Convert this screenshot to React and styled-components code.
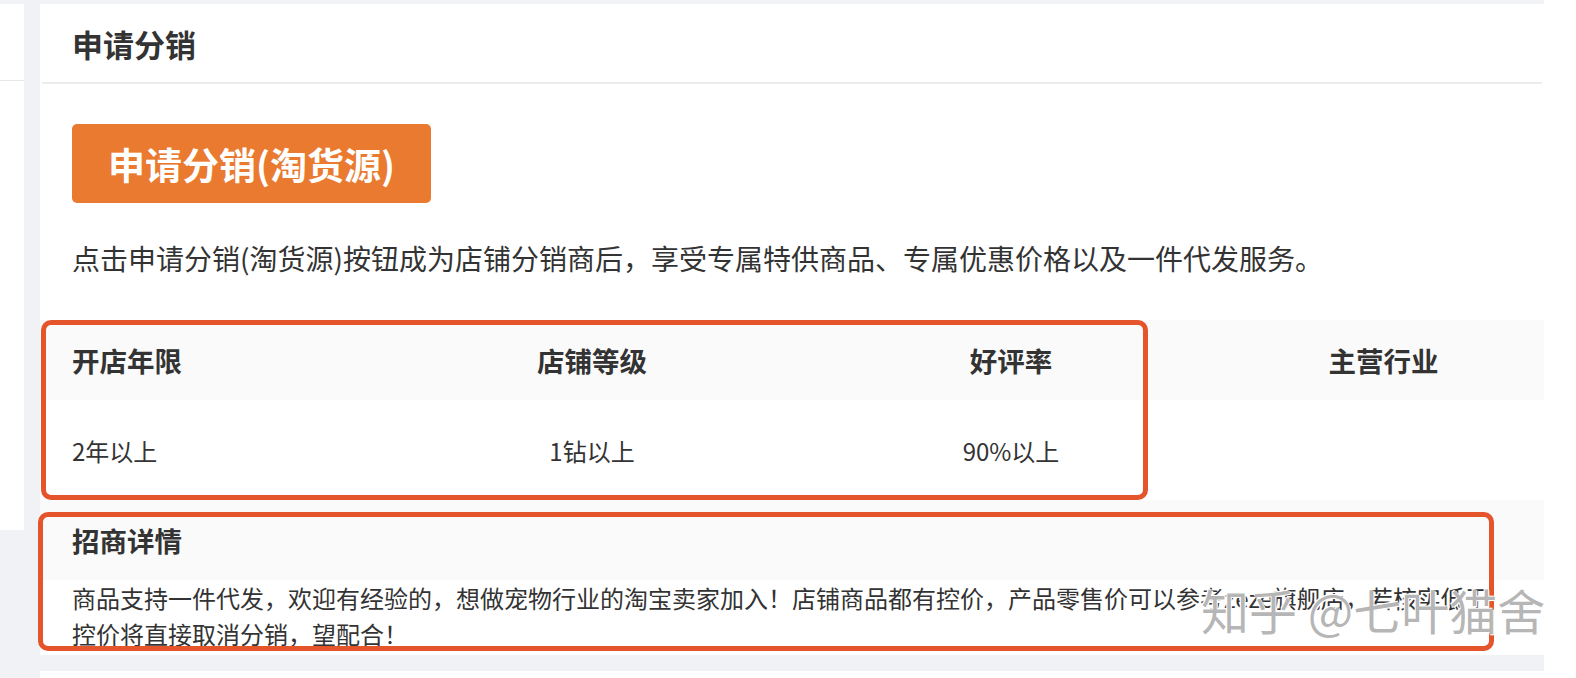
import React from "react";
import styled, { createGlobalStyle } from "styled-components";

const Global = createGlobalStyle`
  html, body { margin: 0; padding: 0; background: #ffffff; }
  body { font-family: "Noto Sans CJK SC", "Noto Sans", sans-serif; color: #333; overflow: hidden; }
`;

const Page = styled.div`
  width: 1544px;
  height: 678px;
  background: #f1f2f6;
  padding-top: 4px;
  box-sizing: border-box;
  display: flex;
  gap: 16px;
  align-items: flex-start;
  overflow: hidden;
`;

const SideCard = styled.div`
  width: 24px;
  height: 526px;
  background: #fff;
  display: flex;
  flex-direction: column;
`;

const SideTop = styled.div`
  height: 76px;
  border-bottom: 1px solid #e6e6e6;
`;

const MainCol = styled.div`
  flex: 1;
  display: flex;
  flex-direction: column;
  gap: 16px;
  position: relative;
`;

const Card = styled.div`
  background: #fff;
  display: flex;
  flex-direction: column;
`;

const CardHeader = styled.div`
  height: 78px;
  display: flex;
  align-items: center;
  margin: 0 2px;
  padding-left: 30px;
  font-size: 31px;
  font-weight: 700;
  color: #333;
  border-bottom: 2px solid #ececec;
`;

const Body = styled.div`
  padding-top: 40px;
  display: flex;
  flex-direction: column;
`;

const ApplyButton = styled.button`
  margin-left: 32px;
  width: 359px;
  height: 79px;
  border: none;
  border-radius: 5px;
  background: #e97a30;
  color: #fff;
  font-family: inherit;
  font-size: 37px;
  font-weight: 700;
  display: flex;
  align-items: center;
  justify-content: center;
  padding: 0;
  cursor: pointer;
`;

const Desc = styled.p`
  margin: 35px 0 42px 32px;
  font-size: 28px;
  line-height: 40px;
  color: #333;
`;

const Row = styled.div`
  display: grid;
  grid-template-columns: 345px 414px 424px 1fr;
  align-items: center;
  height: ${(p) => p.$h}px;
  background: ${(p) => (p.$head ? "#fafafa" : "#fff")};
`;

const Cell = styled.div`
  text-align: ${(p) => (p.$left ? "left" : "center")};
  padding-left: ${(p) => (p.$left ? "32px" : "0")};
  font-size: ${(p) => (p.$head ? "27.5px" : "24px")};
  font-weight: ${(p) => (p.$head ? 700 : 400)};
  color: #333;
`;

const DetailHead = styled.div`
  height: 80px;
  background: #fafafa;
  display: flex;
  align-items: center;
  padding-left: 32px;
  font-size: 27.5px;
  font-weight: 700;
  color: #333;
`;

const DetailText = styled.p`
  margin: 0;
  padding: 0 32px 3px 32px;
  font-size: 24px;
  line-height: 36px;
  color: #333;
`;

const NextCard = styled.div`
  background: #fff;
  height: 40px;
`;

const Mark = styled.div`
  position: absolute;
  left: ${(p) => p.$x}px;
  top: ${(p) => p.$y}px;
  width: ${(p) => p.$w}px;
  height: ${(p) => p.$h}px;
  border: 5px solid #e4552c;
  border-radius: 10px;
  box-sizing: border-box;
  pointer-events: none;
`;

const Watermark = styled.div`
  position: absolute;
  left: 1161px;
  top: 574px;
  font-size: 48px;
  line-height: 62px;
  color: rgba(150, 150, 150, 0.7);
  white-space: nowrap;
  text-shadow: 0 0 2px #fff, 1px 1px 0 #fff, -1px -1px 0 #fff;
  pointer-events: none;
`;

const cols = [
  { head: "开店年限", val: "2年以上", left: true },
  { head: "店铺等级", val: "1钻以上" },
  { head: "好评率", val: "90%以上" },
  { head: "主营行业", val: "" },
];

export default function App() {
  return (
    <>
      <Global />
      <Page>
        <SideCard>
          <SideTop />
        </SideCard>
        <MainCol>
          <Card>
            <CardHeader>申请分销</CardHeader>
            <Body>
              <ApplyButton>申请分销(淘货源)</ApplyButton>
              <Desc>
                点击申请分销(淘货源)按钮成为店铺分销商后，享受专属特供商品、专属优惠价格以及一件代发服务。
              </Desc>
              <Row $head $h={80}>
                {cols.map((c) => (
                  <Cell key={c.head} $head $left={c.left}>
                    {c.head}
                  </Cell>
                ))}
              </Row>
              <Row $h={100}>
                {cols.map((c) => (
                  <Cell key={c.head} $left={c.left}>
                    {c.val}
                  </Cell>
                ))}
              </Row>
              <DetailHead>招商详情</DetailHead>
              <DetailText>
                商品支持一件代发，欢迎有经验的，想做宠物行业的淘宝卖家加入！店铺商品都有控价，产品零售价可以参考zeze旗舰店，若核实低于控价将直接取消分销，望配合！
              </DetailText>
            </Body>
          </Card>
          <NextCard />
          <Mark $x={1} $y={316} $w={1107} $h={180} />
          <Mark $x={-2} $y={508} $w={1456} $h={139} />
          <Watermark>知乎 @七叶猫舍</Watermark>
        </MainCol>
      </Page>
    </>
  );
}
